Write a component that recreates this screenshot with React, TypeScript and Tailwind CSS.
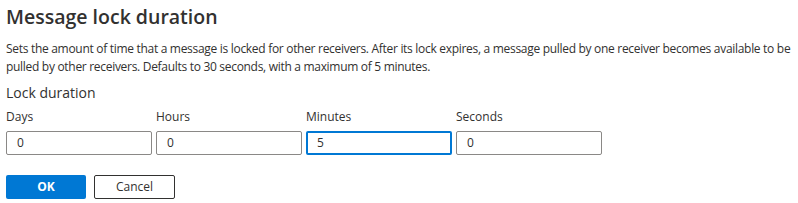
import React, { useState } from 'react';

const fields = [
  { label: 'Days', value: '0' },
  { label: 'Hours', value: '0' },
  { label: 'Minutes', value: '5', focused: true },
  { label: 'Seconds', value: '0' },
];

export default function App() {
  const [values, setValues] = useState(fields.map((f) => f.value));

  return (
    <div
      className="w-[798px] h-[203px] bg-white text-[#323130] px-[6px] pt-[4px]"
      style={{ fontFamily: '"Open Sans", "Noto Sans", sans-serif' }}
    >
      {/* Header */}
      <h1 className="text-[19.5px] font-semibold leading-[26px]">Message lock duration</h1>

      <p className="text-[12px] leading-[18px] mt-[10px] tracking-[-0.3px]">
        Sets the amount of time that a message is locked for other receivers. After its lock expires, a message pulled by
        one receiver becomes available to be pulled by other receivers. Defaults to 30 seconds, with a maximum of 5
        minutes.
      </p>

      <div className="text-[14px] leading-[20px] mt-[7px]">Lock duration</div>

      {/* Inputs */}
      <div className="flex gap-[4px] mt-[5px]">
        {fields.map((f, i) => (
          <div key={f.label} className="w-[146px]">
            <label className="block text-[12px] leading-[18px] mb-[3px]">{f.label}</label>
            <input
              value={values[i]}
              onChange={(e) => setValues(values.map((v, j) => (j === i ? e.target.value : v)))}
              className={
                f.focused
                  ? 'w-full h-[24px] rounded-[2px] border-2 border-[#0078d4] px-[9px] text-[12px] outline-none'
                  : 'w-full h-[24px] rounded-[2px] border border-[#8a8886] px-[10px] text-[12px] outline-none'
              }
            />
          </div>
        ))}
      </div>

      {/* Actions */}
      <div className="flex gap-[8px] mt-[20px]">
        <button className="w-[80px] h-[24px] rounded-[2px] bg-[#0078d4] text-white text-[12px] font-bold">OK</button>
        <button className="w-[81px] h-[24px] rounded-[2px] border border-[#323130] bg-white text-[12px]">Cancel</button>
      </div>
    </div>
  );
}
